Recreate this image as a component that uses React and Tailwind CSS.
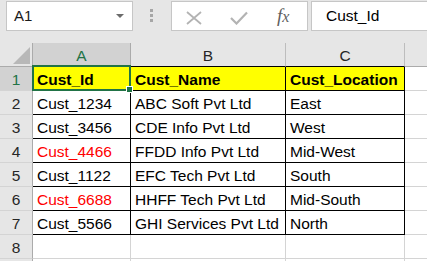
import React from "react";

const rows = [
  ["Cust_1234", "ABC Soft Pvt Ltd", "East", false],
  ["Cust_3456", "CDE Info Pvt Ltd", "West", false],
  ["Cust_4466", "FFDD Info Pvt Ltd", "Mid-West", true],
  ["Cust_1122", "EFC Tech Pvt Ltd", "South", false],
  ["Cust_6688", "HHFF Tech Pvt Ltd", "Mid-South", true],
  ["Cust_5566", "GHI Services Pvt Ltd", "North", false],
];

function RowHead({ n, active }) {
  return (
    <div
      className={`w-[33px] shrink-0 flex items-end justify-center pb-[1px] leading-[18px] border-r border-b border-r-[#ababab] border-b-[#d4d4d4] ${
        active ? "bg-[#d2d2d2] text-[#217346]" : "bg-[#e6e6e6] text-[#262626]"
      }`}
    >
      {n}
    </div>
  );
}

function Cell({ w, children, className = "" }) {
  return (
    <div
      className={`${w} shrink-0 flex items-end pl-[4px] pb-[1px] leading-[18px] whitespace-nowrap overflow-hidden border-r border-b border-black ${className}`}
    >
      {children}
    </div>
  );
}

function Rest() {
  return <div className="flex-1 border-b border-[#d4d4d4]" />;
}

export default function App() {
  return (
    <div
      className="w-[427px] h-[261px] overflow-hidden bg-white relative text-[15.5px] text-black"
      style={{ fontFamily: '"Liberation Sans", Arial, sans-serif' }}
    >
      {/* Formula bar */}
      <div className="h-[43px] bg-[#e6e6e6] flex items-start pt-[1px] pl-[6px]">
        <div className="w-[127px] h-[30px] bg-white border border-[#c6c6c6] flex items-center pl-[7px] pr-[8px] text-[15px] text-[#1a1a1a]">
          <span className="flex-1">A1</span>
          <svg width="8" height="5" viewBox="0 0 8 5">
            <polygon points="0,0 8,0 4,4" fill="#6b6b6b" />
          </svg>
        </div>
        <div className="ml-[17px] mt-[8px] flex flex-col gap-[2px]">
          <div className="w-[3px] h-[3px] bg-[#a6a6a6]" />
          <div className="w-[3px] h-[3px] bg-[#a6a6a6]" />
          <div className="w-[3px] h-[3px] bg-[#a6a6a6]" />
        </div>
        <div className="ml-[18px] w-[137px] h-[30px] bg-white border border-[#c6c6c6] relative">
          <svg className="absolute left-[14px] top-[9px]" width="16" height="14" viewBox="0 0 16 14">
            <path d="M1 1 L15 13 M15 1 L1 13" stroke="#b3b3b3" strokeWidth="1.8" fill="none" />
          </svg>
          <svg className="absolute left-[58px] top-[9px]" width="18" height="14" viewBox="0 0 18 14">
            <path d="M1 7 L6.5 12.5 L17 1.5" stroke="#b3b3b3" strokeWidth="2.2" fill="none" />
          </svg>
          <span
            className="absolute left-[105px] top-[3px] text-[19px] italic text-[#5f5f5f] leading-[22px]"
            style={{ fontFamily: '"Liberation Serif", "Times New Roman", serif' }}
          >
            f<span className="text-[16px]">x</span>
          </span>
        </div>
        <div className="ml-[3px] flex-1 h-[30px] bg-white border-l border-y border-[#c6c6c6] flex items-center pl-[14px]">
          Cust_Id
        </div>
      </div>

      {/* Column headers */}
      <div className="h-[24px] flex text-[#262626]">
        <div className="w-[33px] shrink-0 bg-[#e6e6e6] border-r border-b border-[#ababab] flex items-end justify-end pr-[2px] pb-[2px]">
          <svg width="17" height="17" viewBox="0 0 17 17">
            <polygon points="17,0 17,17 0,17" fill="#b8b8b8" />
          </svg>
        </div>
        <div className="w-[98px] shrink-0 bg-[#d2d2d2] text-[#217346] border-r border-b border-r-[#ababab] border-b-[#217346] flex items-end justify-center pb-[1px] leading-[18px]">
          A
        </div>
        <div className="w-[155px] shrink-0 bg-[#e6e6e6] border-r border-b border-r-[#bdbdbd] border-b-black flex items-end justify-center pb-[1px] leading-[18px]">
          B
        </div>
        <div className="w-[119px] shrink-0 bg-[#e6e6e6] border-r border-b border-r-[#bdbdbd] border-b-black flex items-end justify-center pb-[1px] leading-[18px]">
          C
        </div>
        <div className="flex-1 bg-[#e6e6e6] border-b border-[#ababab]" />
      </div>

      {/* Row 1 headers */}
      <div className="h-[24px] flex">
        <RowHead n={1} active />
        <Cell w="w-[98px]" className="bg-[#ffff00] font-bold">Cust_Id</Cell>
        <Cell w="w-[155px]" className="bg-[#ffff00] font-bold">Cust_Name</Cell>
        <Cell w="w-[119px]" className="bg-[#ffff00] font-bold">Cust_Location</Cell>
        <Rest />
      </div>

      {rows.map(([id, name, loc, red], i) => (
        <div key={id} className="h-[24px] flex">
          <RowHead n={i + 2} />
          <Cell w="w-[98px]" className={red ? "text-[#ff0000]" : ""}>{id}</Cell>
          <Cell w="w-[155px]">{name}</Cell>
          <Cell w="w-[119px]">{loc}</Cell>
          <Rest />
        </div>
      ))}

      {[8, ""].map((n, i) => (
        <div key={i} className="h-[24px] flex">
          <RowHead n={n} />
          <div className="w-[98px] shrink-0 border-r border-b border-[#d4d4d4]" />
          <div className="w-[155px] shrink-0 border-r border-b border-[#d4d4d4]" />
          <div className="w-[119px] shrink-0 border-r border-b border-[#d4d4d4]" />
          <Rest />
        </div>
      ))}

      {/* Active cell overlay */}
      <div className="absolute left-[32px] top-[65px] w-[99px] h-[26px] border-2 border-[#217346] pointer-events-none" />
      <div className="absolute left-[126px] top-[86px] w-[7px] h-[7px] bg-[#217346] border border-white" />
    </div>
  );
}
